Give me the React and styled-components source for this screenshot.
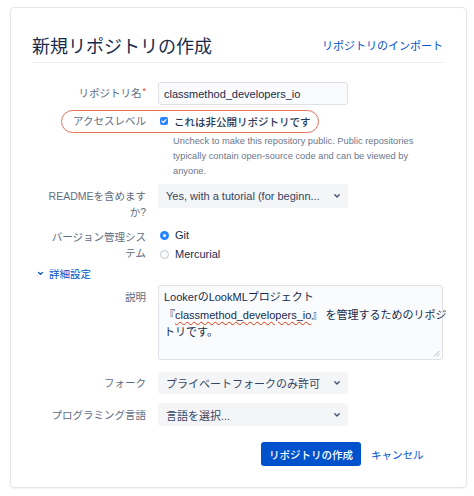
import styled, { createGlobalStyle } from 'styled-components';

const GlobalStyle = createGlobalStyle`
  body {
    margin: 0;
    background: #ffffff;
    font-family: 'Liberation Sans', 'Noto Sans CJK JP', sans-serif;
    color: #172b4d;
  }
`;

const Page = styled.div`
  width: 474px;
  height: 496px;
  padding: 7px 7px 0 10px;
  box-sizing: border-box;
`;

const Card = styled.div`
  width: 457px;
  height: 481px;
  box-sizing: border-box;
  border: 1px solid #e4e6ea;
  border-radius: 4px;
  box-shadow: 0 1px 2px rgba(9, 30, 66, 0.06);
  padding: 21px 23px 0 21px;
`;

const Header = styled.div`
  display: flex;
  justify-content: space-between;
  align-items: center;
  height: 32px;
  border-bottom: 1px solid #ebecf0;
  padding-bottom: 1px;
`;

const Title = styled.h1`
  margin: 0;
  font-size: 18px;
  font-weight: 400;
  color: #172b4d;
`;

const Link = styled.a`
  color: #0052cc;
  font-size: ${p => p.$size || '10.5px'};
  text-decoration: none;
  cursor: pointer;
`;

const Form = styled.div`
  padding-top: 19px;
  display: flex;
  flex-direction: column;
`;

const Row = styled.div`
  position: relative;
  display: grid;
  grid-template-columns: 98px 1fr;
  column-gap: 12px;
  margin-left: 16px;
  margin-top: ${p => p.$mt || '0'};
  align-items: ${p => (p.$top ? 'start' : 'center')};
`;

const Label = styled.div`
  text-align: right;
  font-size: 10.5px;
  line-height: 16px;
  color: #5e6c84;
  padding-top: ${p => p.$pt || '0'};
`;

const Required = styled.span`
  color: #de350b;
  font-size: 9px;
  margin-left: 1px;
  position: relative;
  top: -3px;
`;

const TextInput = styled.div`
  width: 190px;
  height: 23px;
  box-sizing: border-box;
  border: 1px solid #dfe1e6;
  border-radius: 3px;
  background: #fafbfc;
  display: flex;
  align-items: center;
  padding-left: 5px;
  font-size: 11px;
  color: #172b4d;
`;

const Select = styled.div`
  width: 190px;
  height: ${p => p.$h || '23px'};
  box-sizing: border-box;
  border-radius: 3px;
  background: #f4f5f7;
  display: flex;
  align-items: center;
  justify-content: space-between;
  padding: 0 7px 0 8px;
  font-size: 11px;
  color: #344563;
`;

const Highlight = styled.div`
  position: absolute;
  left: 13px;
  top: -3px;
  width: 258px;
  height: 23px;
  box-sizing: border-box;
  border: 1.5px solid #e8735a;
  border-radius: 12px;
  pointer-events: none;
`;

const CheckLine = styled.div`
  display: flex;
  align-items: center;
  gap: 6px;
  font-size: 10.5px;
  font-weight: 500;
  color: #253858;
  padding-left: 2px;
`;

const CheckBox = styled.span`
  width: 8px;
  height: 8px;
  border-radius: 2px;
  background: #2684ff;
  display: inline-flex;
  align-items: center;
  justify-content: center;
`;

const Help = styled.div`
  grid-column: 2;
  padding-left: 15px;
  margin-top: 5px;
  font-size: 9.3px;
  line-height: 15px;
  color: #6b778c;
  width: 260px;
`;

const RadioGroup = styled.div`
  display: flex;
  flex-direction: column;
  gap: 5px;
  padding-top: 1px;
`;

const RadioItem = styled.div`
  display: flex;
  align-items: center;
  gap: 6px;
  font-size: 11px;
  line-height: 14px;
  color: #172b4d;
  padding-left: 2px;
`;

const Radio = styled.span`
  width: 9px;
  height: 9px;
  border-radius: 50%;
  box-sizing: border-box;
  background: ${p => (p.$checked ? '#2684ff' : '#fafbfc')};
  border: ${p => (p.$checked ? 'none' : '1px solid #c1c7d0')};
  display: inline-flex;
  align-items: center;
  justify-content: center;

  &::after {
    content: '';
    display: ${p => (p.$checked ? 'block' : 'none')};
    width: 3px;
    height: 3px;
    border-radius: 50%;
    background: #ffffff;
  }
`;

const Toggle = styled.div`
  display: flex;
  align-items: center;
  gap: 5px;
  margin-top: 4px;
  margin-left: 5px;
  font-size: 10.5px;
  color: #0052cc;
  height: 16px;
`;

const TextArea = styled.div`
  position: relative;
  width: 285px;
  height: 75px;
  box-sizing: border-box;
  border: 1px solid #dfe1e6;
  border-radius: 3px;
  background: #fafbfc;
  padding: 3px 2px 3px 5px;
  font-size: 11px;
  line-height: 17.5px;
  color: #172b4d;
`;

const Line = styled.div`
  white-space: nowrap;
`;

const Squiggle = styled.span`
  text-decoration: underline wavy #de350b;
  text-decoration-thickness: 1px;
  text-underline-offset: 2px;
`;

const Resize = styled.svg`
  position: absolute;
  right: 2px;
  bottom: 2px;
`;

const Actions = styled.div`
  display: flex;
  align-items: center;
  gap: 10px;
  margin-top: 16px;
  margin-left: 229px;
`;

const Primary = styled.button`
  width: 100px;
  height: 24px;
  border: none;
  border-radius: 3px;
  background: #0052cc;
  color: #ffffff;
  font-family: inherit;
  font-size: 10.5px;
  font-weight: 500;
  padding: 0;
  cursor: pointer;
`;

const Chevron = ({ color = '#42526e', size = 8 }) => (
  <svg width={size} height={size} viewBox="0 0 8 8">
    <path d="M1.8 2.8 L4 5 L6.2 2.8" fill="none" stroke={color} strokeWidth="1.4" strokeLinecap="round" strokeLinejoin="round" />
  </svg>
);

const App = () => (
  <Page>
    <GlobalStyle />
    <Card>
      <Header>
        <Title>新規リポジトリの作成</Title>
        <Link $size="11px">リポジトリのインポート</Link>
      </Header>
      <Form>
        <Row>
          <Label>
            リポジトリ名<Required>*</Required>
          </Label>
          <TextInput>classmethod_developers_io</TextInput>
        </Row>
        <Row $mt="8px">
          <Highlight />
          <Label>アクセスレベル</Label>
          <CheckLine>
            <CheckBox>
              <svg width="6" height="6" viewBox="0 0 6 6">
                <path d="M1 3.2 L2.4 4.5 L5 1.6" fill="none" stroke="#fff" strokeWidth="1.2" strokeLinecap="round" strokeLinejoin="round" />
              </svg>
            </CheckBox>
            これは非公開リポジトリです
          </CheckLine>
          <Help>
            Uncheck to make this repository public. Public repositories typically contain open-source code and can be viewed by anyone.
          </Help>
        </Row>
        <Row $top $mt="5px">
          <Label $pt="4px">READMEを含めますか?</Label>
          <Select $h="24px">
            Yes, with a tutorial (for beginn...
            <Chevron />
          </Select>
        </Row>
        <Row $top $mt="7px">
          <Label $pt="2px">バージョン管理システム</Label>
          <RadioGroup>
            <RadioItem>
              <Radio $checked />
              Git
            </RadioItem>
            <RadioItem>
              <Radio />
              Mercurial
            </RadioItem>
          </RadioGroup>
        </Row>
        <Toggle>
          <Chevron color="#0052cc" size={7} />
          詳細設定
        </Toggle>
        <Row $top $mt="4px">
          <Label $pt="4px">説明</Label>
          <TextArea>
            <Line>LookerのLookMLプロジェクト</Line>
            <Line>
              『<Squiggle>classmethod_developers_io</Squiggle>』 を管理するためのリポジ
            </Line>
            <Line>トリです。</Line>
            <Resize width="7" height="7" viewBox="0 0 7 7">
              <path d="M6.5 1 L1 6.5 M6.5 4 L4 6.5" stroke="#a5adba" strokeWidth="0.8" />
            </Resize>
          </TextArea>
        </Row>
        <Row $mt="12px">
          <Label>フォーク</Label>
          <Select $h="22px">
            プライベートフォークのみ許可
            <Chevron />
          </Select>
        </Row>
        <Row $mt="9px">
          <Label>プログラミング言語</Label>
          <Select>
            言語を選択...
            <Chevron />
          </Select>
        </Row>
        <Actions>
          <Primary>リポジトリの作成</Primary>
          <Link $size="10.5px">キャンセル</Link>
        </Actions>
      </Form>
    </Card>
  </Page>
);

export default App;
